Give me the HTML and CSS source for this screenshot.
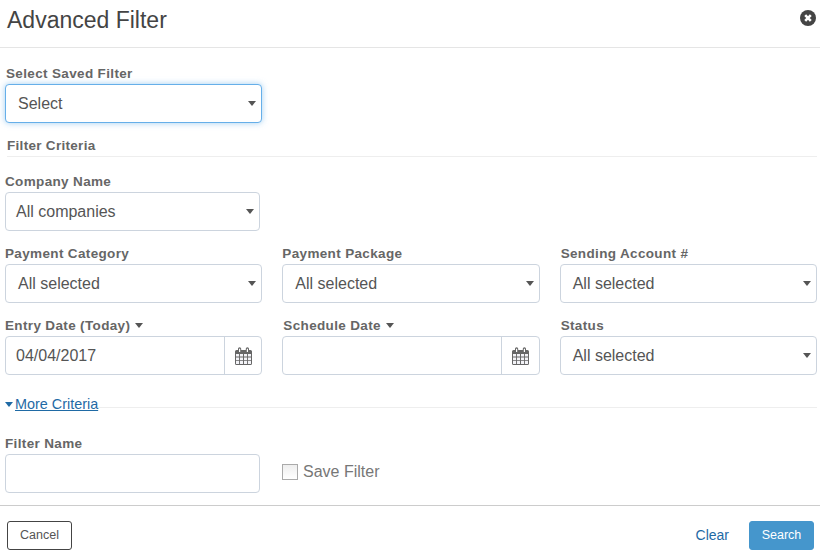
FILE: index.html
```html
<!DOCTYPE html>
<html lang="en">
<head>
<meta charset="utf-8">
<title>Advanced Filter</title>
<link rel="stylesheet" href="styles.css">
</head>
<body>
<svg class="defs" width="0" height="0" aria-hidden="true">
  <symbol id="cal" viewBox="0 0 17 18">
    <path fill="#666" d="M1.5 3H3V1.8a1.6 1.6 0 0 1 3.2 0V3h4.6V1.8a1.6 1.6 0 0 1 3.2 0V3h1.5A1.5 1.5 0 0 1 17 4.5v12a1.5 1.5 0 0 1-1.5 1.5h-14A1.5 1.5 0 0 1 0 16.5v-12A1.5 1.5 0 0 1 1.5 3z"/>
    <path fill="#fff" d="M4 1.7h1.2V5H4zM11.8 1.7H13V5h-1.2z"/>
    <path fill="#f3f3f7" d="M1 7h3.1v2.6H1zM5 7h3v2.6H5zM9 7h3v2.6H9zM12.9 7H16v2.6h-3.1zM1 10.4h3.1V13H1zM5 10.4h3V13H5zM9 10.4h3V13H9zM12.9 10.4H16V13h-3.1zM1 13.8h3.1V17H1zM5 13.8h3V17H5zM9 13.8h3V17H9zM12.9 13.8H16V17h-3.1z"/>
  </symbol>
</svg>
<header class="head">
  <h1 class="title">Advanced Filter</h1>
  <svg class="close" viewBox="0 0 16 16" aria-label="Close">
    <circle cx="8" cy="8" r="8" fill="#444"/>
    <path d="M5.2 5.2l5.6 5.6M10.8 5.2l-5.6 5.6" stroke="#fff" stroke-width="2.6"/>
  </svg>
</header>
<main class="body">
  <div class="field saved">
    <label class="label nudge">Select Saved Filter</label>
    <div class="control focus"><span>Select</span><i class="caret"></i></div>
  </div>
  <h2 class="section">Filter Criteria</h2>
  <div class="field company">
    <label class="label">Company Name</label>
    <div class="control"><span>All companies</span><i class="caret"></i></div>
  </div>
  <div class="grid">
    <div class="field">
      <label class="label">Payment Category</label>
      <div class="control"><span>All selected</span><i class="caret"></i></div>
    </div>
    <div class="field">
      <label class="label">Payment Package</label>
      <div class="control"><span>All selected</span><i class="caret"></i></div>
    </div>
    <div class="field">
      <label class="label nudge">Sending Account #</label>
      <div class="control"><span>All selected</span><i class="caret"></i></div>
    </div>
    <div class="field">
      <label class="label">Entry Date (Today) <i class="caret small"></i></label>
      <div class="control date"><span class="date-value">04/04/2017</span><span class="addon"><svg class="cal"><use href="#cal"/></svg></span></div>
    </div>
    <div class="field">
      <label class="label nudge">Schedule Date <i class="caret small"></i></label>
      <div class="control date"><span class="date-value"></span><span class="addon"><svg class="cal"><use href="#cal"/></svg></span></div>
    </div>
    <div class="field">
      <label class="label nudge">Status</label>
      <div class="control"><span>All selected</span><i class="caret"></i></div>
    </div>
  </div>
  <div class="more"><i class="caret blue"></i><a class="more-link" href="#">More Criteria</a></div>
  <div class="name-row">
    <div class="field company">
      <label class="label">Filter Name</label>
      <div class="control"></div>
    </div>
    <label class="save"><span class="box"></span>Save Filter</label>
  </div>
</main>
<footer class="foot">
  <button class="btn cancel">Cancel</button>
  <div class="actions">
    <a class="clear" href="#">Clear</a>
    <button class="btn search">Search</button>
  </div>
</footer>
</body>
</html>
```
FILE: styles.css
```css
* { box-sizing: border-box; }
html, body { margin: 0; height: 554px; overflow: hidden; }
body { width: 820px; background: #fff; font-family: "Liberation Sans", Arial, sans-serif; color: #555; }
.defs { position: absolute; }
.head { height: 48px; border-bottom: 1px solid #e5e5e5; display: flex; justify-content: space-between; padding: 7px 4px 0 7px; }
.title { margin: 0; font-size: 23px; font-weight: 400; line-height: 27px; color: #444; }
.close { width: 16px; height: 16px; margin-top: 3px; }
.body { padding: 17px 3px 0 5px; }
.field { display: flex; flex-direction: column; }
.label { display: block; height: 17px; line-height: 17px; font-size: 13.5px; font-weight: 700; letter-spacing: 0.35px; color: #666; margin-bottom: 2px; white-space: nowrap; }
.nudge { margin-left: 1px; }
.control { height: 39px; border: 1px solid #ccd4de; border-radius: 4px; display: flex; align-items: center; justify-content: space-between; padding: 0 5px 0 12px; font-size: 16px; color: #555; background: #fff; }
.control.focus { border-color: #66afe9; box-shadow: 0 0 6px rgba(102,175,233,.6); }
.saved { width: 257px; }
.company { width: 255px; }
.company .control { padding-left: 10px; }
.caret { display: inline-block; width: 0; height: 0; border-left: 4.5px solid transparent; border-right: 4.5px solid transparent; border-top: 5px solid #555; }
.caret.small { margin-left: 1px; vertical-align: 2px; }
.caret.blue { border-top-color: #1f6aa5; margin-right: 1px; }
.section { margin: 12px 0 16px 2px; height: 22px; line-height: 21px; font-size: 13.5px; letter-spacing: 0.3px; font-weight: 700; color: #666; border-bottom: 1px solid #eee; }
.grid { display: grid; grid-template-columns: repeat(3, 1fr); column-gap: 20px; row-gap: 14px; margin-top: 14px; }
.control.date { padding: 0; }
.date-value { flex: 1; padding-left: 10px; }
.addon { width: 37.5px; height: 100%; border-left: 1px solid #ccd4de; display: flex; align-items: center; justify-content: center; }
.cal { width: 17px; height: 18px; }
.more { display: flex; align-items: center; margin: 20px 0 0; height: 18px; font-size: 14.4px; line-height: 18px; }
.more::after { content: ""; flex: 1; align-self: flex-start; margin-top: 12px; border-top: 1px solid #eee; }
.more-link { color: #1f6aa5; text-decoration: underline; margin-left: 1px; }
.name-row { display: flex; align-items: flex-end; margin-top: 22px; }
.save { display: flex; align-items: center; height: 42px; margin-left: 22px; font-size: 16px; color: #777; }
.box { width: 16px; height: 16px; margin-right: 5px; border: 1px solid #aaa; background: linear-gradient(#eee, #fff); }
.foot { position: absolute; left: 0; right: 0; top: 505px; height: 49px; border-top: 1px solid #ccc; display: flex; justify-content: space-between; padding: 15px 6px 0 7px; }
.actions { display: flex; align-items: flex-start; }
.btn { height: 29px; width: 65px; border-radius: 3px; font: 12.5px "Liberation Sans", Arial, sans-serif; padding: 0 0 2px; }
.cancel { background: #fff; border: 1px solid #444; color: #555; }
.search { background: #4596cc; border: 1px solid #4596cc; color: #fff; }
.clear { margin: 6px 20px 0 0; font-size: 14px; color: #1f6aa5; text-decoration: none; }
```
